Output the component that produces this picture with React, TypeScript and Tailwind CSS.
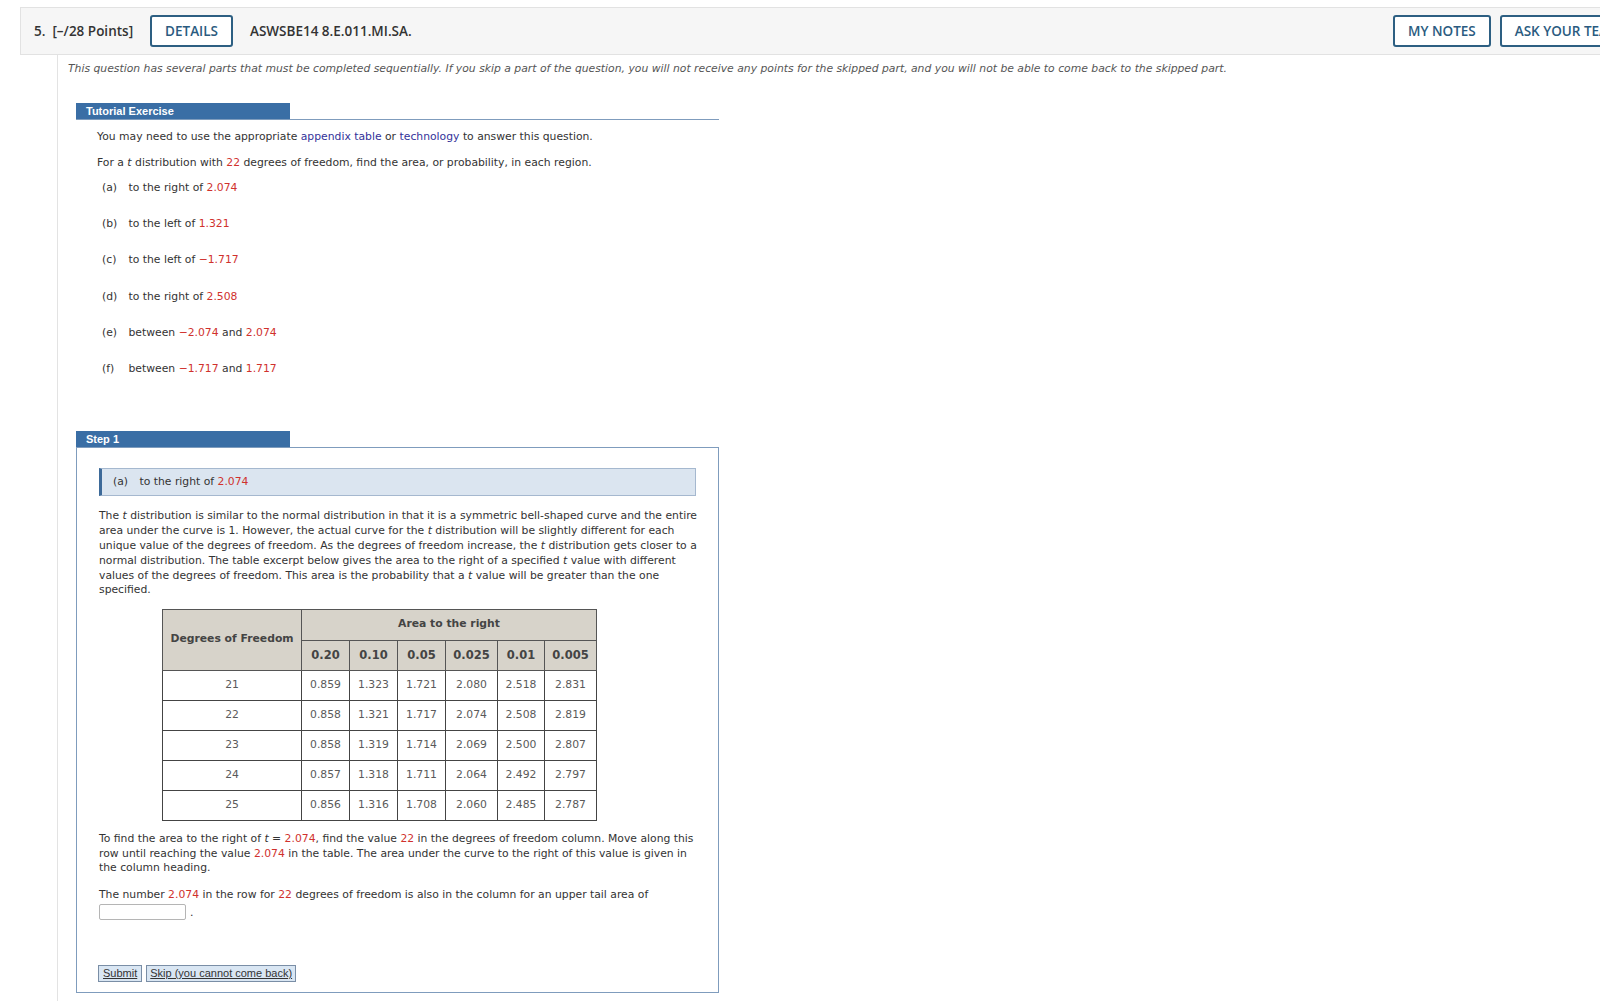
import React from 'react';

const R = ({ children }: { children: React.ReactNode }) => <span className="text-[#d0312d]">{children}</span>;

const parts: { label: string; body: React.ReactNode }[] = [
  { label: '(a)', body: <>to the right of <R>2.074</R></> },
  { label: '(b)', body: <>to the left of <R>1.321</R></> },
  { label: '(c)', body: <>to the left of <R>&minus;1.717</R></> },
  { label: '(d)', body: <>to the right of <R>2.508</R></> },
  { label: '(e)', body: <>between <R>&minus;2.074</R> and <R>2.074</R></> },
  { label: '(f)', body: <>between <R>&minus;1.717</R> and <R>1.717</R></> },
];

const heads = ['0.20', '0.10', '0.05', '0.025', '0.01', '0.005'];
const colW = ['w-[48px]', 'w-[48px]', 'w-[48px]', 'w-[52px]', 'w-[47px]', 'w-[52px]'];

const rows: [string, string[]][] = [
  ['21', ['0.859', '1.323', '1.721', '2.080', '2.518', '2.831']],
  ['22', ['0.858', '1.321', '1.717', '2.074', '2.508', '2.819']],
  ['23', ['0.858', '1.319', '1.714', '2.069', '2.500', '2.807']],
  ['24', ['0.857', '1.318', '1.711', '2.064', '2.492', '2.797']],
  ['25', ['0.856', '1.316', '1.708', '2.060', '2.485', '2.787']],
];

const SectionTab = ({ label }: { label: string }) => (
  <div className="w-[214px] h-[16px] bg-[#3a6ea5] pl-[10px] text-white font-bold text-[11px] leading-[16px] font-['Liberation_Sans',Arial,sans-serif]">
    {label}
  </div>
);

const HeaderButton = ({ children }: { children: React.ReactNode }) => (
  <div className="h-[32px] px-[13px] flex items-center border-2 border-[#2d5f82] rounded-[3px] bg-white text-[#2a5b80] font-semibold text-[13.5px] whitespace-nowrap">
    {children}
  </div>
);

export default function App() {
  return (
    <div className="w-[1600px] min-h-[1001px] bg-white overflow-hidden text-[#333] font-['DejaVu_Sans',Verdana,sans-serif]">
      {/* question header */}
      <div className="pt-[7px] pl-[20px]">
        <div className="w-[1640px] h-[48px] bg-[#f6f6f6] border border-[#e2e2e2] flex items-center pl-[13px] font-['Open_Sans',sans-serif]">
          <div className="w-[1359px] flex-none flex items-center">
            <span className="font-semibold text-[13.5px] text-[#333]">5.&nbsp; [&ndash;/28 Points]</span>
            <div className="ml-[17px]">
              <HeaderButton>DETAILS</HeaderButton>
            </div>
            <span className="ml-[17px] font-semibold text-[13.5px] text-[#333]">ASWSBE14 8.E.011.MI.SA.</span>
          </div>
          <div className="flex gap-[9px]">
            <HeaderButton>MY NOTES</HeaderButton>
            <HeaderButton>ASK YOUR TEACHER</HeaderButton>
          </div>
        </div>
      </div>

      {/* question body */}
      <div className="ml-[57px] border-l border-[#e3e3e3] min-h-[946px] pl-[10px] pt-[7px]">
        <p className="italic text-[10.8px] leading-[14px] text-[#555]">
          This question has several parts that must be completed sequentially. If you skip a part of the question, you will not receive any points for the skipped part, and you will not be able to come back to the skipped part.
        </p>

        <div className="ml-[8px] mt-[27px] w-[643px]">
          {/* tutorial exercise */}
          <div className="border-b border-[#7f9cbd]">
            <SectionTab label="Tutorial Exercise" />
          </div>
          <div className="pl-[21px] text-[10.8px] leading-[14px]">
            <p className="mt-[10px]">
              You may need to use the appropriate <span className="text-[#33339a]">appendix table</span> or{' '}
              <span className="text-[#33339a]">technology</span> to answer this question.
            </p>
            <p className="mt-[11.5px]">
              For a <i>t</i> distribution with <R>22</R> degrees of freedom, find the area, or probability, in each region.
            </p>
            <div className="mt-[11.5px] ml-[5px] flex flex-col gap-[22.2px]">
              {parts.map((p) => (
                <div key={p.label} className="flex">
                  <span className="w-[26.5px]">{p.label}</span>
                  <span>{p.body}</span>
                </div>
              ))}
            </div>
          </div>

          {/* step 1 */}
          <div className="mt-[55px]">
            <div className="h-[16px]">
              <SectionTab label="Step 1" />
            </div>
            <div className="border border-[#7f9cbd] h-[546px] px-[22px] pt-[20px] text-[10.8px] leading-[14.8px]">
              <div className="h-[28px] bg-[#dbe5f0] border border-[#a5b8cf] border-l-[3px] border-l-[#3d6a99] flex items-center pl-[11px]">
                <span className="w-[26.5px]">(a)</span>
                <span>to the right of <R>2.074</R></span>
              </div>

              <p className="mt-[13.5px] mr-[-8px]">
                The <i>t</i> distribution is similar to the normal distribution in that it is a symmetric bell-shaped curve and the entire area under the curve is 1. However, the actual curve for the <i>t</i> distribution will be slightly different for each unique value of the degrees of freedom. As the degrees of freedom increase, the <i>t</i> distribution gets closer to a normal distribution. The table excerpt below gives the area to the right of a specified <i>t</i> value with different values of the degrees of freedom. This area is the probability that a <i>t</i> value will be greater than the one specified.
              </p>

              <table className="ml-[63px] mt-[10.5px] border-collapse border border-[#333] text-center">
                <thead className="bg-[#d7d3ca]">
                  <tr className="h-[31px]">
                    <th rowSpan={2} className="w-[139px] border border-[#555] font-bold text-[10.8px] text-[#444]">
                      Degrees of Freedom
                    </th>
                    <th colSpan={6} className="border border-[#555] font-bold text-[10.8px] text-[#444]">
                      Area to the right
                    </th>
                  </tr>
                  <tr className="h-[30px]">
                    {heads.map((h, i) => (
                      <th key={h} className={`${colW[i]} border border-[#555] font-bold text-[11.5px] text-[#444]`}>
                        {h}
                      </th>
                    ))}
                  </tr>
                </thead>
                <tbody className="text-[#5a5a5a] text-[10.8px]">
                  {rows.map(([df, vals]) => (
                    <tr key={df} className="h-[30px]">
                      <td className="border border-[#444]">{df}</td>
                      {vals.map((v, i) => (
                        <td key={i} className="border border-[#444]">
                          {v}
                        </td>
                      ))}
                    </tr>
                  ))}
                </tbody>
              </table>

              <p className="mt-[11px]">
                To find the area to the right of <i>t</i> = <R>2.074</R>, find the value <R>22</R> in the degrees of freedom column. Move along this row until reaching the value <R>2.074</R> in the table. The area under the curve to the right of this value is given in the column heading.
              </p>
              <p className="mt-[11.5px]">
                The number <R>2.074</R> in the row for <R>22</R> degrees of freedom is also in the column for an upper tail area of
              </p>
              <div className="mt-[2px] flex items-end gap-[4px]">
                <div className="w-[87px] h-[16px] border border-[#b5b5b5] rounded-[2px] bg-white" />
                <span>.</span>
              </div>

              <div className="mt-[45px] -ml-[1px] flex gap-[4px] font-['Liberation_Sans',Arial,sans-serif] text-[11px] text-[#333]">
                <span className="h-[17px] px-[4px] leading-[15px] bg-[#d9e6f3] border border-[#7a8ea6] underline">Submit</span>
                <span className="h-[17px] px-[3px] leading-[15px] bg-[#d9e6f3] border border-[#7a8ea6] underline">Skip (you cannot come back)</span>
              </div>
            </div>
          </div>
        </div>
      </div>
    </div>
  );
}
